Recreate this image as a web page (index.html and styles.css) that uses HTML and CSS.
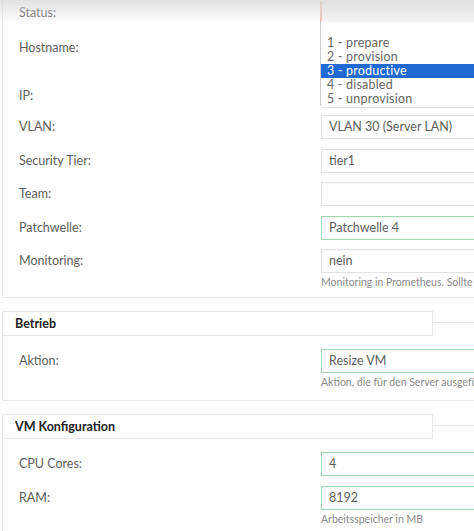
FILE: index.html
```html
<!DOCTYPE html>
<html lang="de">
<head>
<meta charset="utf-8">
<title>Server bearbeiten</title>
<link rel="stylesheet" href="styles.css">
</head>
<body>
<div class="page">
  <div class="card card-first">
    <div class="row row-status">
      <div class="label">Status:</div>
      <div class="field status-field"></div>
    </div>
    <div class="row row-host">
      <div class="label">Hostname:</div>
      <div class="field-wrap">
        <div class="field"></div>
        <div class="help">&nbsp;</div>
      </div>
    </div>
    <div class="row row-ip">
      <div class="label">IP:</div>
      <div class="field"></div>
    </div>
    <div class="row">
      <div class="label">VLAN:</div>
      <div class="field">VLAN 30 (Server LAN)</div>
    </div>
    <div class="row">
      <div class="label">Security Tier:</div>
      <div class="field">tier1</div>
    </div>
    <div class="row">
      <div class="label">Team:</div>
      <div class="field"></div>
    </div>
    <div class="row">
      <div class="label">Patchwelle:</div>
      <div class="field ok">Patchwelle 4</div>
    </div>
    <div class="row row-last">
      <div class="label">Monitoring:</div>
      <div class="field-wrap">
        <div class="field">nein</div>
        <div class="help">Monitoring in Prometheus. Sollte bei produktiven Servern aktiv sein.</div>
      </div>
    </div>
  </div>

  <div class="card">
    <div class="card-head">Betrieb</div>
    <div class="card-body">
      <div class="row row-last">
        <div class="label">Aktion:</div>
        <div class="field-wrap">
          <div class="field ok">Resize VM</div>
          <div class="help">Aktion, die für den Server ausgeführt werden soll.</div>
        </div>
      </div>
    </div>
  </div>

  <div class="card">
    <div class="card-head">VM Konfiguration</div>
    <div class="card-body">
      <div class="row">
        <div class="label">CPU Cores:</div>
        <div class="field ok">4</div>
      </div>
      <div class="row row-last">
        <div class="label">RAM:</div>
        <div class="field-wrap">
          <div class="field ok">8192</div>
          <div class="help">Arbeitsspeicher in MB</div>
        </div>
      </div>
    </div>
  </div>

  <ul class="listbox">
    <li class="opt">&nbsp;</li>
    <li class="opt">1 - prepare</li>
    <li class="opt">2 - provision</li>
    <li class="opt sel">3 - productive</li>
    <li class="opt">4 - disabled</li>
    <li class="opt">5 - unprovision</li>
  </ul>
  <div class="top-shade"></div>
</div>
</body>
</html>
```

FILE: styles.css
```css
html, body {
  margin: 0;
  padding: 0;
  background: #ffffff;
  overflow: hidden;
}
body {
  font-family: Lato, "Liberation Sans", sans-serif;
  font-size: 12.5px;
  color: #5e5e5e;
}
.page {
  position: relative;
  width: 474px;
  height: 531px;
  overflow: hidden;
  padding-left: 2px;
  box-sizing: border-box;
}
.card {
  width: 700px;
  border: 1px solid #e9e9e9;
  background: #ffffff;
  margin-top: 24px;
  box-sizing: border-box;
}
.card-first {
  margin-top: -12px;
  padding: 12px 0 8px 16px;
}
.card-head {
  width: 431px;
  box-sizing: border-box;
  height: 25px;
  margin: -12px 0 0 -1px;
  padding-left: 12px;
  border: 1px solid #e6e6e6;
  background: #ffffff;
  font-weight: 700;
  color: #222222;
  font-size: 12.5px;
  line-height: 23px;
}
.card-body {
  padding: 13px 0 11px 16px;
}
.row {
  display: flex;
  align-items: flex-start;
  margin-bottom: 9.6px;
}
.row-last {
  margin-bottom: 0;
}
.label {
  width: 302px;
  flex: none;
  line-height: 24px;
  height: 24px;
}
.field-wrap {
  width: 400px;
}
.field {
  width: 400px;
  height: 24px;
  box-sizing: border-box;
  border: 1px solid #e2e2e2;
  box-shadow: inset 0 1px 1px rgba(0,0,0,0.04);
  padding-left: 7px;
  line-height: 22px;
  color: #5e5e5e;
  background: #ffffff;
}
.field.ok {
  border-color: #9fd8b1;
}
.help {
  font-size: 10.5px;
  color: #8a8a8a;
  line-height: 14px;
  margin-top: 2px;
  white-space: nowrap;
}
.row-status {
  margin-bottom: 11px;
}
.status-field {
  height: 23px;
  border: none;
  border-left: 2px solid #ecc2b4;
  border-bottom: 1px solid #6d625e;
  margin-left: -1px;
  box-shadow: none;
  background: #f6f6f6;
}
.row-host {
  margin-bottom: 8px;
}
.row-ip {
  margin-bottom: 7px;
}
.listbox {
  position: absolute;
  left: 320px;
  top: 22px;
  width: 200px;
  height: 84px;
  margin: 0;
  padding: 0;
  list-style: none;
  background: #ffffff;
  border-left: 1px solid #cccccc;
}
.opt {
  height: 14px;
  line-height: 14px;
  padding-left: 6px;
  font-size: 12.5px;
  color: #666666;
  letter-spacing: 0.2px;
}
.opt.sel {
  background: #1f6ad3;
  color: #ffffff;
}
.top-shade {
  position: absolute;
  left: 0;
  top: 0;
  width: 474px;
  height: 24px;
  background: linear-gradient(to bottom, rgba(215,215,215,0.75), rgba(255,255,255,0));
  pointer-events: none;
}
```
